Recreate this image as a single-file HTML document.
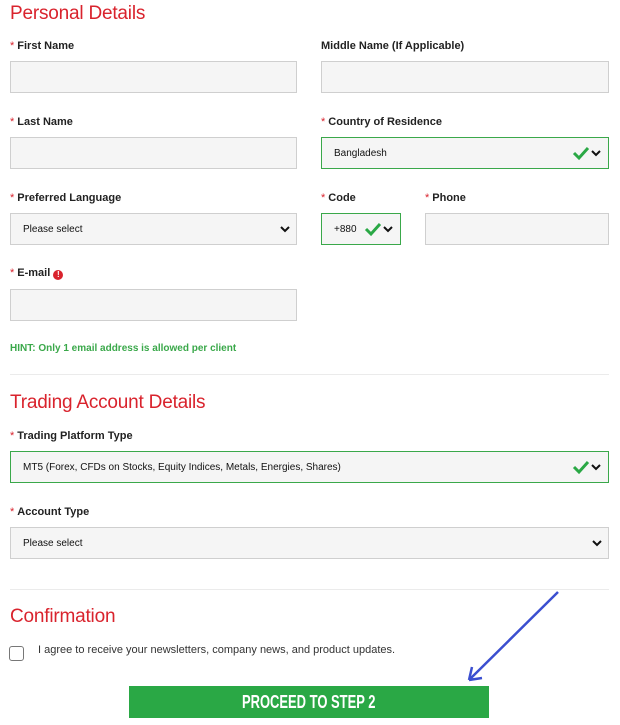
<!DOCTYPE html>
<html><head><style>
*{margin:0;padding:0;box-sizing:border-box}
body{width:620px;height:725px;background:#fff;position:relative;font-family:"Liberation Sans",sans-serif;overflow:hidden}
.a{position:absolute}
h2{position:absolute;left:10px;font-weight:normal;font-size:19px;color:#d9232d;letter-spacing:-0.2px}
.l{position:absolute;font-size:11px;font-weight:bold;color:#222;line-height:14px}
.l b{color:#d9232d;font-weight:normal;margin-right:3px}
.i{position:absolute;height:32px;background:#f5f5f5;border:1px solid #cfcfcf}
.g{border-color:#3aa84a}
.t{position:absolute;left:12px;top:10px;font-size:10px;color:#111}
.hr{position:absolute;left:10px;width:599px;height:1px;background:#ebebeb}
</style></head><body>
<h2 style="top:3px">Personal Details</h2>
<div class="l" style="left:10px;top:39px"><b>*</b>First Name</div>
<div class="l" style="left:321px;top:39px">Middle Name (If Applicable)</div>
<div class="i" style="left:10px;top:61px;width:287px"></div>
<div class="i" style="left:321px;top:61px;width:288px"></div>
<div class="l" style="left:10px;top:115px"><b>*</b>Last Name</div>
<div class="l" style="left:321px;top:115px"><b>*</b>Country of Residence</div>
<div class="i" style="left:10px;top:137px;width:287px"></div>
<div class="i g" style="left:321px;top:137px;width:288px"><span class="t">Bangladesh</span>
<svg class="a" style="right:4px;top:7px" width="32" height="16"><path d="M2 8 L7 13 L16 3" stroke="#2aa845" stroke-width="3" fill="none"/><path d="M20 6 L24 10 L28 6" stroke="#111" stroke-width="2" fill="none"/></svg></div>
<div class="l" style="left:10px;top:191px"><b>*</b>Preferred Language</div>
<div class="l" style="left:321px;top:191px"><b>*</b>Code</div>
<div class="l" style="left:425px;top:191px"><b>*</b>Phone</div>
<div class="i" style="left:10px;top:213px;width:287px"><span class="t">Please select</span>
<svg class="a" style="right:4px;top:7px" width="14" height="16"><path d="M3 6 L7 10 L11 6" stroke="#111" stroke-width="2" fill="none"/></svg></div>
<div class="i g" style="left:321px;top:213px;width:80px"><span class="t">+880</span>
<svg class="a" style="right:4px;top:7px" width="32" height="16"><path d="M2 8 L7 13 L16 3" stroke="#2aa845" stroke-width="3" fill="none"/><path d="M20 6 L24 10 L28 6" stroke="#111" stroke-width="2" fill="none"/></svg></div>
<div class="i" style="left:425px;top:213px;width:184px"></div>
<div class="l" style="left:10px;top:266px"><b>*</b>E-mail <span style="display:inline-block;width:10px;height:10px;border-radius:50%;background:#d9232d;color:#fff;font-size:8px;text-align:center;line-height:10px;vertical-align:-1px">!</span></div>
<div class="i" style="left:10px;top:289px;width:287px"></div>
<div class="a" style="left:10px;top:343px;font-size:10px;font-weight:bold;color:#3aa84a">HINT: Only 1 email address is allowed per client</div>
<div class="hr" style="top:374px"></div>
<h2 style="top:392px">Trading Account Details</h2>
<div class="l" style="left:10px;top:429px"><b>*</b>Trading Platform Type</div>
<div class="i g" style="left:10px;top:451px;width:599px"><span class="t">MT5 (Forex, CFDs on Stocks, Equity Indices, Metals, Energies, Shares)</span>
<svg class="a" style="right:4px;top:7px" width="32" height="16"><path d="M2 8 L7 13 L16 3" stroke="#2aa845" stroke-width="3" fill="none"/><path d="M20 6 L24 10 L28 6" stroke="#111" stroke-width="2" fill="none"/></svg></div>
<div class="l" style="left:10px;top:505px"><b>*</b>Account Type</div>
<div class="i" style="left:10px;top:527px;width:599px"><span class="t">Please select</span>
<svg class="a" style="right:4px;top:7px" width="14" height="16"><path d="M3 6 L7 10 L11 6" stroke="#111" stroke-width="2" fill="none"/></svg></div>
<div class="hr" style="top:589px"></div>
<h2 style="top:606px">Confirmation</h2>
<div class="a" style="left:9px;top:646px;width:15px;height:15px;border:1px solid #777;border-radius:3px"></div>
<div class="a" style="left:38px;top:644px;font-size:11px;color:#333">I agree to receive your newsletters, company news, and product updates.</div>
<div class="a" style="left:129px;top:686px;width:360px;height:32px;background:#2aa845;color:#fff;text-align:center;line-height:32px;font-size:18px;font-weight:bold;font-family:'Liberation Sans Narrow','Liberation Sans',sans-serif"><span style="display:inline-block;transform:scaleX(0.72)">PROCEED TO STEP 2</span></div>
<svg class="a" style="left:0;top:0" width="620" height="725"><path d="M558 592 L469 680 M469 680 L472 667 M469 680 L482 678" stroke="#3b4fd0" stroke-width="2.5" fill="none"/></svg>
</body></html>
